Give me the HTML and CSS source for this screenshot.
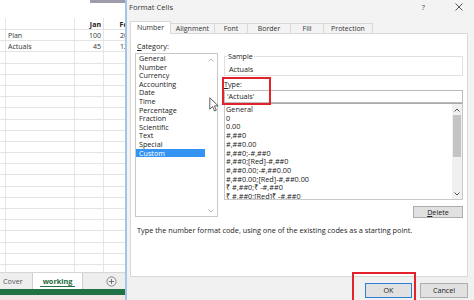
FILE: index.html
```html
<!DOCTYPE html>
<html>
<head>
<meta charset="utf-8">
<title>Format Cells</title>
<link rel="stylesheet" href="styles.css">
</head>
<body>
<div class="screen">
  <div class="sheet">
    <div class="sheet-top"><div class="ribbon-stub"></div></div>
    <div class="grid">
      <div class="row head"><span class="c a"></span><span class="c b"></span><span class="c n">Jan</span><span class="c n">Feb</span></div>
      <div class="row"><span class="c a"></span><span class="c b">Plan</span><span class="c n">100</span><span class="c n">200</span></div>
      <div class="row"><span class="c a"></span><span class="c b">Actuals</span><span class="c n">45</span><span class="c n">120</span></div>
      <div class="row"><span class="c a"></span><span class="c b"></span><span class="c n"></span><span class="c n"></span></div>
      <div class="row"><span class="c a"></span><span class="c b"></span><span class="c n"></span><span class="c n"></span></div>
      <div class="row"><span class="c a"></span><span class="c b"></span><span class="c n"></span><span class="c n"></span></div>
      <div class="row"><span class="c a"></span><span class="c b"></span><span class="c n"></span><span class="c n"></span></div>
      <div class="row"><span class="c a"></span><span class="c b"></span><span class="c n"></span><span class="c n"></span></div>
      <div class="row"><span class="c a"></span><span class="c b"></span><span class="c n"></span><span class="c n"></span></div>
      <div class="row"><span class="c a"></span><span class="c b"></span><span class="c n"></span><span class="c n"></span></div>
      <div class="row"><span class="c a"></span><span class="c b"></span><span class="c n"></span><span class="c n"></span></div>
      <div class="row"><span class="c a"></span><span class="c b"></span><span class="c n"></span><span class="c n"></span></div>
      <div class="row"><span class="c a"></span><span class="c b"></span><span class="c n"></span><span class="c n"></span></div>
      <div class="row"><span class="c a"></span><span class="c b"></span><span class="c n"></span><span class="c n"></span></div>
      <div class="row"><span class="c a"></span><span class="c b"></span><span class="c n"></span><span class="c n"></span></div>
      <div class="row"><span class="c a"></span><span class="c b"></span><span class="c n"></span><span class="c n"></span></div>
      <div class="row"><span class="c a"></span><span class="c b"></span><span class="c n"></span><span class="c n"></span></div>
      <div class="row"><span class="c a"></span><span class="c b"></span><span class="c n"></span><span class="c n"></span></div>
      <div class="row"><span class="c a"></span><span class="c b"></span><span class="c n"></span><span class="c n"></span></div>
      <div class="row"><span class="c a"></span><span class="c b"></span><span class="c n"></span><span class="c n"></span></div>
      <div class="row"><span class="c a"></span><span class="c b"></span><span class="c n"></span><span class="c n"></span></div>
      <div class="row"><span class="c a"></span><span class="c b"></span><span class="c n"></span><span class="c n"></span></div>
      <div class="row"><span class="c a"></span><span class="c b"></span><span class="c n"></span><span class="c n"></span></div>
      <div class="row"><span class="c a"></span><span class="c b"></span><span class="c n"></span><span class="c n"></span></div>
    </div>
    <div class="sheet-tabs">
      <div class="stab">Cover</div>
      <div class="stab active"><span>working</span></div>
      <div class="add">
        <svg width="11" height="11" viewBox="0 0 11 11"><circle cx="5.5" cy="5.5" r="4.6" fill="none" stroke="#7a7a7a" stroke-width="0.9"/><path d="M5.5 3v5M3 5.5h5" stroke="#6a6a6a" stroke-width="0.9"/></svg>
      </div>
    </div>
    <div class="status"></div>
    <div class="under"></div>
  </div>

  <div class="dialog">
    <div class="titlebar">
      <span class="title">Format Cells</span>
      <span class="help">?</span>
      <svg class="close" width="8" height="8" viewBox="0 0 8 8"><path d="M0.5 0.5L7.5 7.5M7.5 0.5L0.5 7.5" stroke="#444" stroke-width="0.9"/></svg>
    </div>
    <div class="tabs">
      <div class="tab active w-number">Number</div>
      <div class="tab w-align">Alignment</div>
      <div class="tab w-font">Font</div>
      <div class="tab w-border">Border</div>
      <div class="tab w-fill">Fill</div>
      <div class="tab w-prot">Protection</div>
    </div>
    <div class="panel">
      <div class="cols">
        <div class="left">
          <div class="lbl cat-lbl"><u>C</u>ategory:</div>
          <div class="listbox cat">
            <div class="items">
              <div class="item">General</div>
              <div class="item">Number</div>
              <div class="item">Currency</div>
              <div class="item">Accounting</div>
              <div class="item">Date</div>
              <div class="item">Time</div>
              <div class="item">Percentage</div>
              <div class="item">Fraction</div>
              <div class="item">Scientific</div>
              <div class="item">Text</div>
              <div class="item">Special</div>
              <div class="item sel">Custom</div>
            </div>
            <div class="sb plain">
              <svg width="6" height="4" viewBox="0 0 6 4"><path d="M0.5 3.5L3 1L5.5 3.5" fill="none" stroke="#b0b0b0" stroke-width="0.9"/></svg>
              <svg width="6" height="4" viewBox="0 0 6 4"><path d="M0.5 0.5L3 3L5.5 0.5" fill="none" stroke="#b0b0b0" stroke-width="0.9"/></svg>
            </div>
          </div>
        </div>
        <div class="right">
          <fieldset class="sample">
            <legend>Sample</legend>
            <div class="sample-val">Actuals</div>
          </fieldset>
          <div class="lbl type-lbl"><u>T</u>ype:</div>
          <div class="input">'Actuals'</div>
          <div class="listbox fmt">
            <div class="items">
              <div class="item">General</div>
              <div class="item">0</div>
              <div class="item">0.00</div>
              <div class="item">#,##0</div>
              <div class="item">#,##0.00</div>
              <div class="item">#,##0;-#,##0</div>
              <div class="item">#,##0;[Red]-#,##0</div>
              <div class="item">#,##0.00;-#,##0.00</div>
              <div class="item">#,##0.00;[Red]-#,##0.00</div>
              <div class="item">₹ #,##0;₹ -#,##0</div>
              <div class="item">₹ #,##0;[Red]₹ -#,##0</div>
            </div>
            <div class="sb track">
              <div class="arrow"><svg width="6" height="4" viewBox="0 0 6 4"><path d="M0.5 3.5L3 1L5.5 3.5" fill="none" stroke="#505050" stroke-width="1"/></svg></div>
              <div class="thumb"></div>
              <div class="arrow bottom"><svg width="6" height="4" viewBox="0 0 6 4"><path d="M0.5 0.5L3 3L5.5 0.5" fill="none" stroke="#505050" stroke-width="1"/></svg></div>
            </div>
          </div>
          <div class="btnrow"><div class="btn del"><u>D</u>elete</div></div>
        </div>
      </div>
      <div class="desc">Type the number format code, using one of the existing codes as a starting point.</div>
    </div>
    <div class="footer">
      <div class="btn ok">OK</div>
      <div class="btn cancel">Cancel</div>
    </div>
  </div>

  <div class="mark mark-type"></div>
  <div class="mark mark-ok"></div>
  <svg class="cursor" width="10" height="15" viewBox="0 0 10 15"><path d="M0.8 0.8V12.2L3.6 9.6L5.6 14L7.3 13.2L5.4 8.9H9.2Z" fill="#fff" stroke="#3a3a3a" stroke-width="0.8" stroke-linejoin="round"/></svg>
</div>
</body>
</html>
```

FILE: styles.css
```css
* { box-sizing: border-box; }
html, body { margin: 0; padding: 0; }
body {
  width: 474px;
  height: 300px;
  overflow: hidden;
  background: #fff;
  font-family: "Open Sans", "Noto Sans", "DejaVu Sans", sans-serif;
  font-size: 7.2px;
  color: #222;
}
.screen {
  position: relative;
  display: flex;
  width: 474px;
  height: 300px;
  overflow: hidden;
}

/* ---------- spreadsheet ---------- */
.sheet {
  width: 125px;
  flex: none;
  display: flex;
  flex-direction: column;
  overflow: hidden;
  background: #fff;
}
.sheet-top { height: 18px; flex: none; }
.ribbon-stub { margin-left: 90px; height: 3px; background: #9c9caa; }
.grid { flex: 1; overflow: hidden; }
.row {
  display: grid;
  grid-template-columns: 5px 70px 29px 31px;
  width: 135px;
  height: 11.2px;
  border-bottom: 1px solid #e4e4e4;
}
.row.head { height: 12px; }
.c {
  border-right: 1px solid #e6e6e6;
  padding: 1px 2px 0 3px;
  line-height: 10.2px;
  white-space: nowrap;
  overflow: hidden;
  font-size: 7px;
  color: #333;
}
.c.n { text-align: right; }
.head .c { font-weight: bold; color: #222; line-height: 12px; padding-top: 1px; }

.sheet-tabs {
  height: 17px;
  flex: none;
  display: flex;
  align-items: stretch;
  background: #eeeeee;
  border-top: 1px solid #d6d6d6;
}
.stab {
  display: flex;
  align-items: center;
  font-size: 7.3px;
  color: #555;
}
.stab:first-child { width: 33px; padding-left: 3px; border-right: 1px solid #cfcfcf; }
.stab.active {
  width: 50px;
  background: #fff;
  justify-content: center;
  font-weight: bold;
  color: #1e6b3e;
  border-right: 1px solid #cfcfcf;
}
.stab.active span { border-bottom: 1.5px solid #217346; padding: 1px 3px 0; line-height: 9px; }
.add { display: flex; align-items: center; margin-left: 23px; }
.status { height: 6px; flex: none; background: #217346; }
.under { height: 5px; flex: none; background: #f6e4e4; }

/* ---------- dialog ---------- */
.dialog {
  flex: none;
  width: 349px;
  border-left: 2px solid #a2c6ea;
  background: #f3f3f3;
  display: flex;
  flex-direction: column;
}
.titlebar {
  height: 14px;
  flex: none;
  display: flex;
  align-items: center;
  padding: 0 11px 0 2px;
}
.title { font-size: 7.6px; color: #333; flex: 1; }
.help { font-size: 7.4px; color: #444; margin-right: 30px; }
.close { display: block; }

.tabs {
  margin-top: 7px;
  height: 12px;
  flex: none;
  display: flex;
  align-items: flex-end;
  padding-left: 3px;
}
.tab {
  height: 10px;
  border: 1px solid #d9d9d9;
  border-bottom: none;
  margin-right: -1px;
  text-align: center;
  line-height: 9px;
  font-size: 7px;
  color: #333;
  background: #f3f3f3;
}
.tab.active {
  height: 13px;
  margin-bottom: -1px;
  background: #fff;
  position: relative;
  z-index: 1;
  line-height: 11px;
}
.w-number { width: 41px; }
.w-align { width: 45px; }
.w-font { width: 34px; }
.w-border { width: 44px; }
.w-fill { width: 34px; }
.w-prot { width: 50px; }

.panel {
  height: 244px;
  flex: none;
  margin: 0 6px 0 3px;
  border: 1px solid #d9d9d9;
  background: #fff;
  padding: 7.5px 4px 0 4px;
}
.cols { display: flex; gap: 6px; }
.left { width: 83px; flex: none; display: flex; flex-direction: column; }
.right { width: 239px; flex: none; display: flex; flex-direction: column; margin-top: 10px; }
.lbl { line-height: 9px; color: #222; }
.cat-lbl { margin: 0 0 2.5px 2px; }

.listbox {
  display: flex;
  border: 1px solid #c8c8c8;
  background: #fff;
}
.listbox .items { flex: 1; overflow: hidden; }
.item { white-space: nowrap; color: #222; }
.cat { height: 164px; }
.cat .item { line-height: 8.6px; padding-left: 3px; }
.cat .item.sel { background: #3494f3; color: #fff; }
.sb.plain {
  width: 12px;
  flex: none;
  display: flex;
  flex-direction: column;
  justify-content: space-between;
  align-items: center;
  padding: 4px 0 3px;
}
.sb svg { display: block; }

.sample {
  margin: 0;
  padding: 0 4px 1.5px;
  border: 1px solid #e0e0e0;
  min-width: 0;
}
.sample legend { padding: 0 1px; margin-left: -2px; line-height: 9px; color: #222; }
.sample-val { line-height: 9px; padding-top: 4px; }
.type-lbl { margin: 3.5px 0 1.5px; }
.input {
  height: 13px;
  border: 1px solid #bcbcbc;
  padding-left: 2px;
  line-height: 11px;
  color: #222;
}
.fmt {
  height: 97px;
  border-top-color: #a9a9a9;
}
.fmt .items { padding: 1px 0 0 1px; font-size: 7.3px; }
.fmt .item { line-height: 8.7px; }
.sb.track {
  width: 10px;
  flex: none;
  display: flex;
  flex-direction: column;
  background: #f0f0f0;
}
.arrow { height: 11px; display: flex; align-items: center; justify-content: center; }
.arrow.bottom { margin-top: auto; }
.thumb { height: 42px; margin: 0 1px; background: #c4c4c4; }

.btnrow { display: flex; justify-content: flex-end; margin-top: 6px; }
.btn {
  height: 12px;
  background: #e1e1e1;
  border: 1px solid #adadad;
  text-align: center;
  line-height: 10px;
  color: #222;
}
.del { width: 50px; }
.desc { margin: 7.5px 0 0 2px; line-height: 9px; color: #222; font-size: 7.3px; }

.footer {
  flex: 1;
  display: flex;
  justify-content: flex-end;
  align-items: flex-start;
  gap: 8px;
  padding: 6px 6px 0 0;
  background: #f0f0f0;
}
.footer .btn { height: 15px; line-height: 13px; }
.ok { width: 47px; border-color: #2a7fd4; }
.cancel { width: 48px; }

/* ---------- annotations ---------- */
.mark { position: absolute; border: 2px solid #e3222b; }
.mark-type { left: 222px; top: 77px; width: 49px; height: 28px; }
.mark-ok { left: 352px; top: 272px; width: 64px; height: 34px; }
.cursor { position: absolute; left: 209px; top: 97px; }
```
